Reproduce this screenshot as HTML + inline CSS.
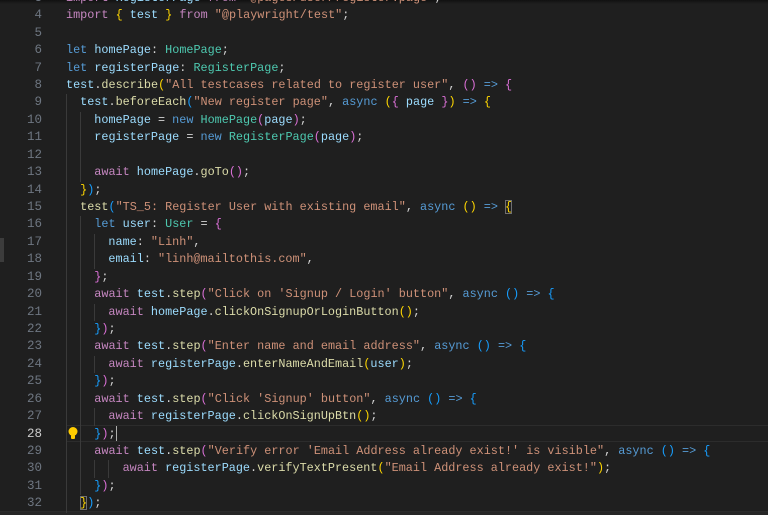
<!DOCTYPE html>
<html><head><meta charset="utf-8">
<style>
html,body{margin:0;padding:0;background:#1f1f1f;width:768px;height:514px;overflow:hidden;}
#ed{position:absolute;left:0;top:0;width:768px;height:514px;background:#1f1f1f;font-family:"Liberation Mono",monospace;font-size:11.8px;}
.ln{position:absolute;left:0;height:17.43px;line-height:17.43px;width:768px;white-space:pre;}
.n{position:absolute;left:0;width:42px;text-align:right;color:#6e7681;font-size:12.5px;}
.c{position:absolute;left:66px;color:#d4d4d4;}
.g{display:inline-block;width:14.15px;height:17.43px;vertical-align:top;box-shadow:inset 1px 0 0 #3a3a3a;}
.k{color:#c586c0}.b{color:#569cd6}.v{color:#9cdcfe}.t{color:#4ec9b0}.f{color:#dcdcaa}.s{color:#ce9178}
.p1{color:#ffd700}.p2{color:#da70d6}.p3{color:#179fff}
.box{outline:1px solid #707070;outline-offset:-1px;}
#cur{position:absolute;border:1px solid #2c2c2c;left:66px;width:702px;height:15px;}
</style></head><body><div id="ed">
<div style="position:absolute;left:0;top:0;width:768px;height:4px;background:linear-gradient(#111,#1f1f1f)"></div>
<div style="position:absolute;left:0;top:238px;width:4px;height:24px;background:#3c3c3c"></div>
<div id="cur" style="top:425px"></div>
<div style="position:absolute;left:0;top:511px;width:768px;height:3px;background:#262626;border-top:1px solid #2b2b2b"></div>
<div id="lines"></div>
</div>
<script>
const L=[
[3,0,'<span class="k">import</span> <span class="v">RegisterPage</span> <span class="k">from</span> <span class="s">"@pages/user/register.page"</span>;'],
[4,0,'<span class="k">import</span> <span class="p1">{</span> <span class="v">test</span> <span class="p1">}</span> <span class="k">from</span> <span class="s">"@playwright/test"</span>;'],
[5,0,''],
[6,0,'<span class="b">let</span> <span class="v">homePage</span>: <span class="t">HomePage</span>;'],
[7,0,'<span class="b">let</span> <span class="v">registerPage</span>: <span class="t">RegisterPage</span>;'],
[8,0,'<span class="v">test</span>.<span class="f">describe</span><span class="p1">(</span><span class="s">"All testcases related to register user"</span>, <span class="p2">()</span> <span class="b">=&gt;</span> <span class="p2">{</span>'],
[9,1,'<span class="v">test</span>.<span class="f">beforeEach</span><span class="p3">(</span><span class="s">"New register page"</span>, <span class="b">async</span> <span class="p1">(</span><span class="p2">{</span> <span class="v">page</span> <span class="p2">}</span><span class="p1">)</span> <span class="b">=&gt;</span> <span class="p1">{</span>'],
[10,2,'<span class="v">homePage</span> = <span class="b">new</span> <span class="t">HomePage</span><span class="p2">(</span><span class="v">page</span><span class="p2">)</span>;'],
[11,2,'<span class="v">registerPage</span> = <span class="b">new</span> <span class="t">RegisterPage</span><span class="p2">(</span><span class="v">page</span><span class="p2">)</span>;'],
[12,2,''],
[13,2,'<span class="k">await</span> <span class="v">homePage</span>.<span class="f">goTo</span><span class="p2">()</span>;'],
[14,1,'<span class="p1">}</span><span class="p3">)</span>;'],
[15,1,'<span class="f">test</span><span class="p3">(</span><span class="s">"TS_5: Register User with existing email"</span>, <span class="b">async</span> <span class="p1">()</span> <span class="b">=&gt;</span> <span class="p1 box">{</span>'],
[16,2,'<span class="b">let</span> <span class="v">user</span>: <span class="t">User</span> = <span class="p2">{</span>'],
[17,3,'<span class="v">name</span>: <span class="s">"Linh"</span>,'],
[18,3,'<span class="v">email</span>: <span class="s">"linh@mailtothis.com"</span>,'],
[19,2,'<span class="p2">}</span>;'],
[20,2,'<span class="k">await</span> <span class="v">test</span>.<span class="f">step</span><span class="p2">(</span><span class="s">"Click on \'Signup / Login\' button"</span>, <span class="b">async</span> <span class="p3">()</span> <span class="b">=&gt;</span> <span class="p3">{</span>'],
[21,3,'<span class="k">await</span> <span class="v">homePage</span>.<span class="f">clickOnSignupOrLoginButton</span><span class="p1">()</span>;'],
[22,2,'<span class="p3">}</span><span class="p2">)</span>;'],
[23,2,'<span class="k">await</span> <span class="v">test</span>.<span class="f">step</span><span class="p2">(</span><span class="s">"Enter name and email address"</span>, <span class="b">async</span> <span class="p3">()</span> <span class="b">=&gt;</span> <span class="p3">{</span>'],
[24,3,'<span class="k">await</span> <span class="v">registerPage</span>.<span class="f">enterNameAndEmail</span><span class="p1">(</span><span class="v">user</span><span class="p1">)</span>;'],
[25,2,'<span class="p3">}</span><span class="p2">)</span>;'],
[26,2,'<span class="k">await</span> <span class="v">test</span>.<span class="f">step</span><span class="p2">(</span><span class="s">"Click \'Signup\' button"</span>, <span class="b">async</span> <span class="p3">()</span> <span class="b">=&gt;</span> <span class="p3">{</span>'],
[27,3,'<span class="k">await</span> <span class="v">registerPage</span>.<span class="f">clickOnSignUpBtn</span><span class="p1">()</span>;'],
[28,2,'<span class="p3">}</span><span class="p2">)</span>;<span style="display:inline-block;width:0;height:15px;border-left:1.5px solid #aeafad;vertical-align:middle"></span>'],
[29,2,'<span class="k">await</span> <span class="v">test</span>.<span class="f">step</span><span class="p2">(</span><span class="s">"Verify error \'Email Address already exist!\' is visible"</span>, <span class="b">async</span> <span class="p3">()</span> <span class="b">=&gt;</span> <span class="p3">{</span>'],
[30,4,'<span class="k">await</span> <span class="v">registerPage</span>.<span class="f">verifyTextPresent</span><span class="p1">(</span><span class="s">"Email Address already exist!"</span><span class="p1">)</span>;'],
[31,2,'<span class="p3">}</span><span class="p2">)</span>;'],
[32,1,'<span class="p1 box">}</span><span class="p3">)</span>;']
];
let h='';
for(const [n,ind,code] of L){
 const top=16-8.715+(n-4)*17.43;
 let g='';for(let i=0;i<ind;i++)g+='<span class="g"></span>';
 h+=`<div class="ln" style="top:${top}px"><span class="n" style="${n==28?'color:#cccccc':''}">${n}</span><span class="c">${g}${code}</span></div>`;
}
h+=`<svg style="position:absolute;left:66px;top:425px" width="14" height="17" viewBox="0 0 14 17"><circle cx="7" cy="6.5" r="4.5" fill="#ffcc00"/><rect x="5" y="10" width="4" height="4" rx="1" fill="#ffcc00"/></svg>`;
document.getElementById('lines').innerHTML=h;
</script>
</body></html>
